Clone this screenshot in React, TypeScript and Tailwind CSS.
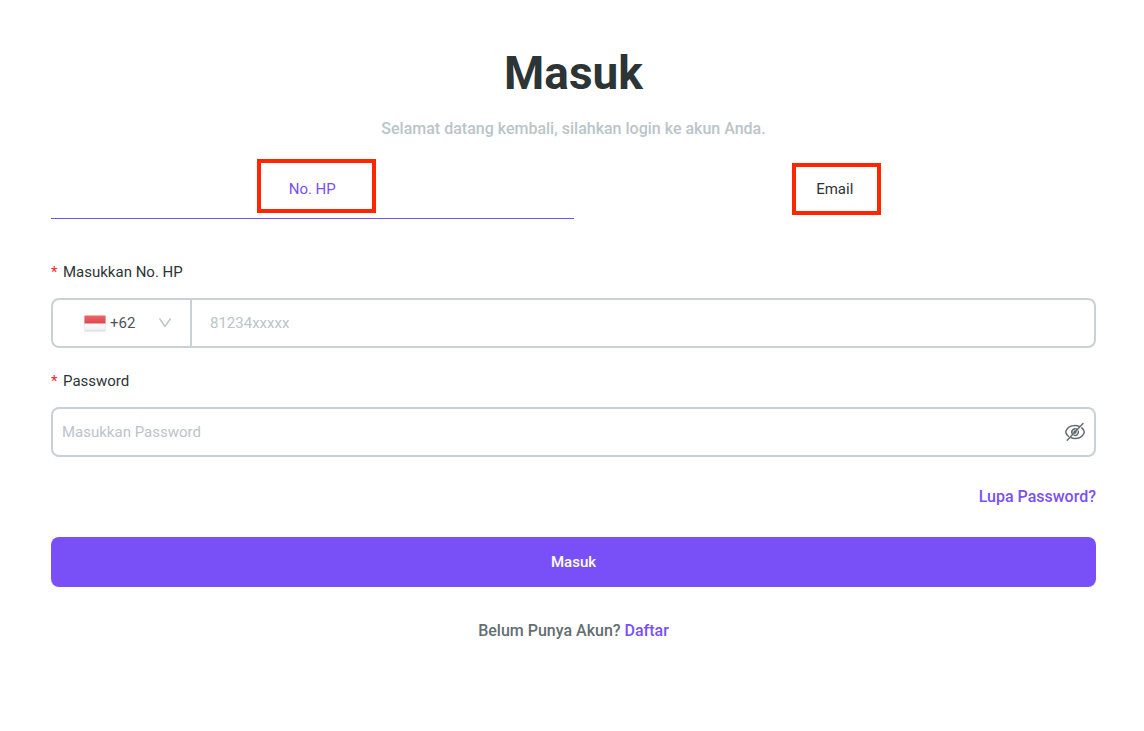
import { useState } from "react";
import type { ReactNode } from "react";

const fieldClasses =
  "flex h-[50px] items-center overflow-hidden rounded-lg border-2 border-[#c8d1d4] bg-white focus-within:border-[#7950f8]";

const inputClasses =
  "h-full min-w-0 flex-1 bg-transparent text-[15px] text-[#2d3436] outline-none placeholder:text-[#b9c5ca]";

function Tab({
  active,
  onClick,
  highlight,
  children,
}: {
  active: boolean;
  onClick: () => void;
  highlight: string;
  children: ReactNode;
}) {
  return (
    <button
      type="button"
      role="tab"
      aria-selected={active}
      onClick={onClick}
      className={`flex h-[59px] flex-1 items-center justify-center border-b text-[15px] leading-6 ${
        active ? "border-[#7950f8] text-[#7950f8]" : "border-transparent text-[#2d3436]"
      }`}
    >
      <span className="relative">
        {children}
        <span aria-hidden="true" className={`absolute border-4 border-[#ff2600] ${highlight}`} />
      </span>
    </button>
  );
}

function FieldLabel({ htmlFor, children }: { htmlFor: string; children: ReactNode }) {
  return (
    <label htmlFor={htmlFor} className="flex gap-1 text-[15px] leading-6 text-[#2d3436]">
      <span className="w-2 text-[#f5222d]">*</span>
      {children}
    </label>
  );
}

function IndonesiaFlag() {
  return (
    <svg width="22" height="17" viewBox="0 0 22 17" aria-hidden="true" className="shrink-0">
      <defs>
        <linearGradient id="flag-red" x1="0" y1="0" x2="0" y2="1">
          <stop offset="0" stopColor="#ed6666" />
          <stop offset="1" stopColor="#e1454c" />
        </linearGradient>
        <linearGradient id="flag-white" x1="0" y1="0" x2="0" y2="1">
          <stop offset="0" stopColor="#ffffff" />
          <stop offset="1" stopColor="#eeeeee" />
        </linearGradient>
      </defs>
      <rect x="0.5" y="1" width="21" height="15.5" fill="#d6d6d6" />
      <rect x="1" y="8" width="20" height="7.5" fill="url(#flag-white)" />
      <rect x="0.5" y="0.5" width="21" height="8" fill="url(#flag-red)" />
    </svg>
  );
}

function ChevronIcon() {
  return (
    <svg
      width="14"
      height="12"
      viewBox="0 0 14 12"
      fill="none"
      stroke="#b9c5ca"
      strokeWidth="1.4"
      aria-hidden="true"
      className="pointer-events-none shrink-0"
    >
      <path d="M1.5 1.5 7 9.5l5.5-8" />
    </svg>
  );
}

function EyeOffIcon() {
  return (
    <svg
      width="20"
      height="20"
      viewBox="0 0 20 20"
      fill="none"
      stroke="#636e72"
      strokeWidth="1.5"
      strokeLinecap="round"
      aria-hidden="true"
    >
      <path d="M3.4 14.3C2.2 13.2 1.2 11.8.9 10.7a2 2 0 0 1 0-1.4C2.2 5.9 5.7 3.4 10 3.4c1.6 0 3 .3 4.2 1" />
      <path d="M16.8 5.9c1.1 1 1.9 2.2 2.3 3.4.2.5.2.9 0 1.4-1.3 3.4-4.8 5.9-9.1 5.9-1.5 0-2.9-.3-4.1-.9" />
      <path d="M7.3 11.9A3.4 3.4 0 0 1 12.2 7.4" />
      <path d="M13.3 9.3A3.4 3.4 0 0 1 9.2 13.3" />
      <circle cx="10" cy="10" r="1" fill="#636e72" />
      <path d="M18 1.5 2.2 18.2" />
    </svg>
  );
}

export default function App() {
  const [tab, setTab] = useState<"phone" | "email">("phone");
  const [showPassword, setShowPassword] = useState(false);

  return (
    <main className="min-h-screen bg-white pt-[45px] pr-12 pb-20 pl-[51px] font-['Roboto',sans-serif]">
      <h1 className="text-center text-[46px] leading-14 font-bold text-[#2d3436]">Masuk</h1>
      <p className="mt-4 text-center text-base leading-6 font-medium text-[#b9c5ca]">
        Selamat datang kembali, silahkan login ke akun Anda.
      </p>

      <div role="tablist" className="mt-[19px] flex">
        <Tab
          active={tab === "phone"}
          onClick={() => setTab("phone")}
          highlight="-top-4.5 -right-10 -bottom-3 -left-8"
        >
          No. HP
        </Tab>
        <Tab
          active={tab === "email"}
          onClick={() => setTab("email")}
          highlight="-top-3.5 -right-7 -bottom-3.5 -left-6"
        >
          Email
        </Tab>
      </div>

      <form onSubmit={(e) => e.preventDefault()} className="mt-[41px]">
        <FieldLabel htmlFor="phone">Masukkan No. HP</FieldLabel>
        <div className={`mt-3.5 ${fieldClasses}`}>
          <div className="flex h-full w-[139px] shrink-0 items-center border-r-2 border-[#c8d1d4] pl-[31px]">
            <IndonesiaFlag />
            <select
              aria-label="Kode negara"
              defaultValue="+62"
              className="ml-1 h-full w-12 appearance-none bg-transparent text-[15px] text-[#4b5457] outline-none"
            >
              <option value="+62">+62</option>
            </select>
            <ChevronIcon />
          </div>
          <input id="phone" type="tel" required placeholder="81234xxxxx" className={`px-[18px] ${inputClasses}`} />
        </div>

        <div className="mt-[21px]">
          <FieldLabel htmlFor="password">Password</FieldLabel>
        </div>
        <div className={`mt-3.5 pr-[9px] ${fieldClasses}`}>
          <input
            id="password"
            type={showPassword ? "text" : "password"}
            required
            placeholder="Masukkan Password"
            className={`pl-[9px] ${inputClasses}`}
          />
          <button type="button" aria-label="Tampilkan password" onClick={() => setShowPassword(!showPassword)}>
            <EyeOffIcon />
          </button>
        </div>

        <div className="mt-7 flex justify-end">
          <a href="#lupa-password" className="text-base leading-6 font-medium text-[#7950f8]">
            Lupa Password?
          </a>
        </div>

        <button
          type="submit"
          className="mt-7 h-[50px] w-full rounded-lg bg-[#7950f8] text-[15px] font-medium text-white hover:bg-[#6a41e8]"
        >
          Masuk
        </button>
      </form>

      <p className="mt-8 text-center text-base leading-6 font-medium text-[#636e72]">
        Belum Punya Akun?{" "}
        <a href="#daftar" className="text-[#7950f8]">
          Daftar
        </a>
      </p>
    </main>
  );
}
